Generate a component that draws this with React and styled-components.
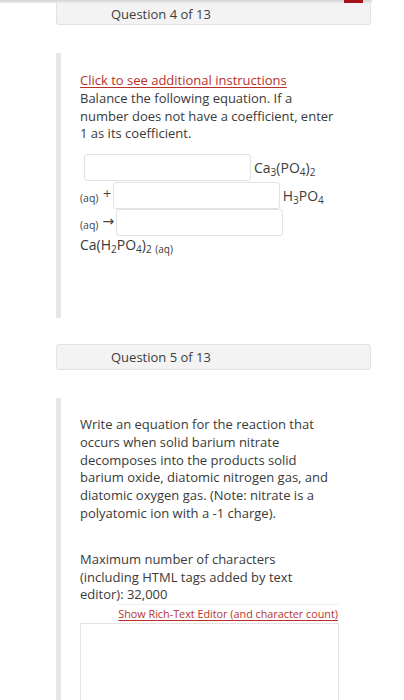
import React from "react";
import styled, { createGlobalStyle } from "styled-components";

const GlobalStyle = createGlobalStyle`
  body {
    margin: 0;
    background: #fff;
    font-family: "Open Sans", "Noto Sans", sans-serif;
    color: #3a3a3a;
  }
`;

const Page = styled.div`
  width: 404px;
  height: 700px;
  overflow: hidden;
`;

const TopStrip = styled.div`
  display: flex;
  justify-content: flex-end;
  width: 372px;
  height: 3px;
  padding-right: 9px;
  box-sizing: border-box;
  background: linear-gradient(#d4d4d4, #ececec);
`;

const RedTab = styled.div`
  width: 19px;
  height: 3px;
  background: #a5121a;
`;

const Header = styled.div`
  margin-left: 56px;
  width: 315px;
  height: ${({ $clipped }) => ($clipped ? "22px" : "26px")};
  box-sizing: border-box;
  display: flex;
  align-items: center;
  padding-left: 54px;
  padding-bottom: ${({ $clipped }) => ($clipped ? "0" : "1px")};
  background: #f3f3f3;
  border: 1px solid #e3e3e3;
  border-top: ${({ $clipped }) => ($clipped ? "none" : "1px solid #e3e3e3")};
  border-radius: ${({ $clipped }) => ($clipped ? "0 0 3px 3px" : "3px")};
  font-size: 13px;
  color: #3d3d3d;
`;

const Block = styled.div`
  margin: 28px 0 26px 56px;
  border-left: 5px solid #e6e6e6;
  padding: ${({ $top }) => $top}px 0 0 19px;
  height: ${({ $h }) => $h}px;
  box-sizing: border-box;
  width: 290px;
  font-size: 13px;
  line-height: 17.8px;
`;

const Link = styled.a`
  color: #b8322a;
  text-decoration: underline;
  text-decoration-thickness: 1px;
  text-underline-offset: 2px;
  cursor: pointer;
  display: block;
`;

const Para = styled.p`
  margin: 0;
  width: ${({ $w }) => $w || 262}px;
`;

const Equation = styled.div`
  margin-top: 11px;
  display: flex;
  flex-direction: column;
  gap: 1px;
`;

const EqRow = styled.div`
  display: flex;
  align-items: flex-start;
  height: ${({ $h }) => $h || 27}px;
`;

const CoefInput = styled.input`
  width: 167px;
  height: 27px;
  box-sizing: border-box;
  border: 1px solid #e2e2e2;
  border-radius: 3px;
  margin-left: ${({ $ml }) => $ml}px;
  margin-right: 3px;
  background: #fff;
  padding: 0 6px;
  font-family: inherit;
`;

const Formula = styled.span`
  font-size: 14px;
  line-height: 14px;
  margin-top: 7px;
  color: #3d3d3d;
  sub {
    font-size: 10px;
    vertical-align: -3px;
    line-height: 0;
  }
`;

const State = styled.span`
  font-size: 10.5px;
  line-height: 10px;
  margin-top: 11px;
  color: #444;
`;

const Op = styled.span`
  font-family: "DejaVu Sans", sans-serif;
  font-size: ${({ $size }) => $size}px;
  line-height: 12px;
  margin: ${({ $top }) => $top}px 0 0 4px;
  color: #444;
`;

const Product = styled.div`
  margin-top: 0px;
  font-size: 14px;
  sub {
    font-size: 10px;
    vertical-align: -3px;
    line-height: 0;
  }
  small {
    font-size: 10px;
    vertical-align: -3px;
  }
`;

const Spacer = styled.div`
  height: ${({ $h }) => $h}px;
`;

const EditorArea = styled.div`
  width: 259px;
  display: flex;
  flex-direction: column;
  align-items: flex-end;
`;

const EditorLink = styled.a`
  font-size: 10.8px;
  line-height: 15px;
  color: #b8322a;
  text-decoration: underline;
  text-underline-offset: 2px;
  padding-right: 1px;
  border-top: 1px solid #efefef;
  padding-top: 1px;
`;

const EditorBox = styled.div`
  width: 259px;
  height: 90px;
  box-sizing: border-box;
  border: 1px solid #e4e4e4;
  margin-top: 2px;
`;

export default function App() {
  return (
    <Page>
      <GlobalStyle />
      <TopStrip>
        <RedTab />
      </TopStrip>
      <Header $clipped>Question 4 of 13</Header>
      <Block $top={19} $h={265}>
        <Link>Click to see additional instructions</Link>
        <Para>
          Balance the following equation. If a number does not have a
          coefficient, enter 1 as its coefficient.
        </Para>
        <Equation>
          <EqRow>
            <CoefInput $ml={4} />
            <Formula>
              Ca<sub>3</sub>(PO<sub>4</sub>)<sub>2</sub>
            </Formula>
          </EqRow>
          <EqRow $h={26}>
            <State>(aq)</State>
            <Op $size={11} $top={6}>+</Op>
            <CoefInput $ml={1} />
            <Formula>
              H<sub>3</sub>PO<sub>4</sub>
            </Formula>
          </EqRow>
          <EqRow $h={26}>
            <State>(aq)</State>
            <Op $size={14} $top={6}>→</Op>
            <CoefInput $ml={2} />
          </EqRow>
          <Product>
            Ca(H<sub>2</sub>PO<sub>4</sub>)<sub>2</sub> <small>(aq)</small>
          </Product>
        </Equation>
      </Block>
      <Header>Question 5 of 13</Header>
      <Block $top={18} $h={320}>
        <Para>
          Write an equation for the reaction that occurs when solid barium
          nitrate decomposes into the products solid barium oxide, diatomic
          nitrogen gas, and diatomic oxygen gas. (Note: nitrate is a
          polyatomic ion with a -1 charge).
        </Para>
        <Spacer $h={28} />
        <Para $w={245}>
          Maximum number of characters (including HTML tags added by text
          editor): 32,000
        </Para>
        <EditorArea>
          <EditorLink>Show Rich-Text Editor (and character count)</EditorLink>
          <EditorBox />
        </EditorArea>
      </Block>
    </Page>
  );
}
